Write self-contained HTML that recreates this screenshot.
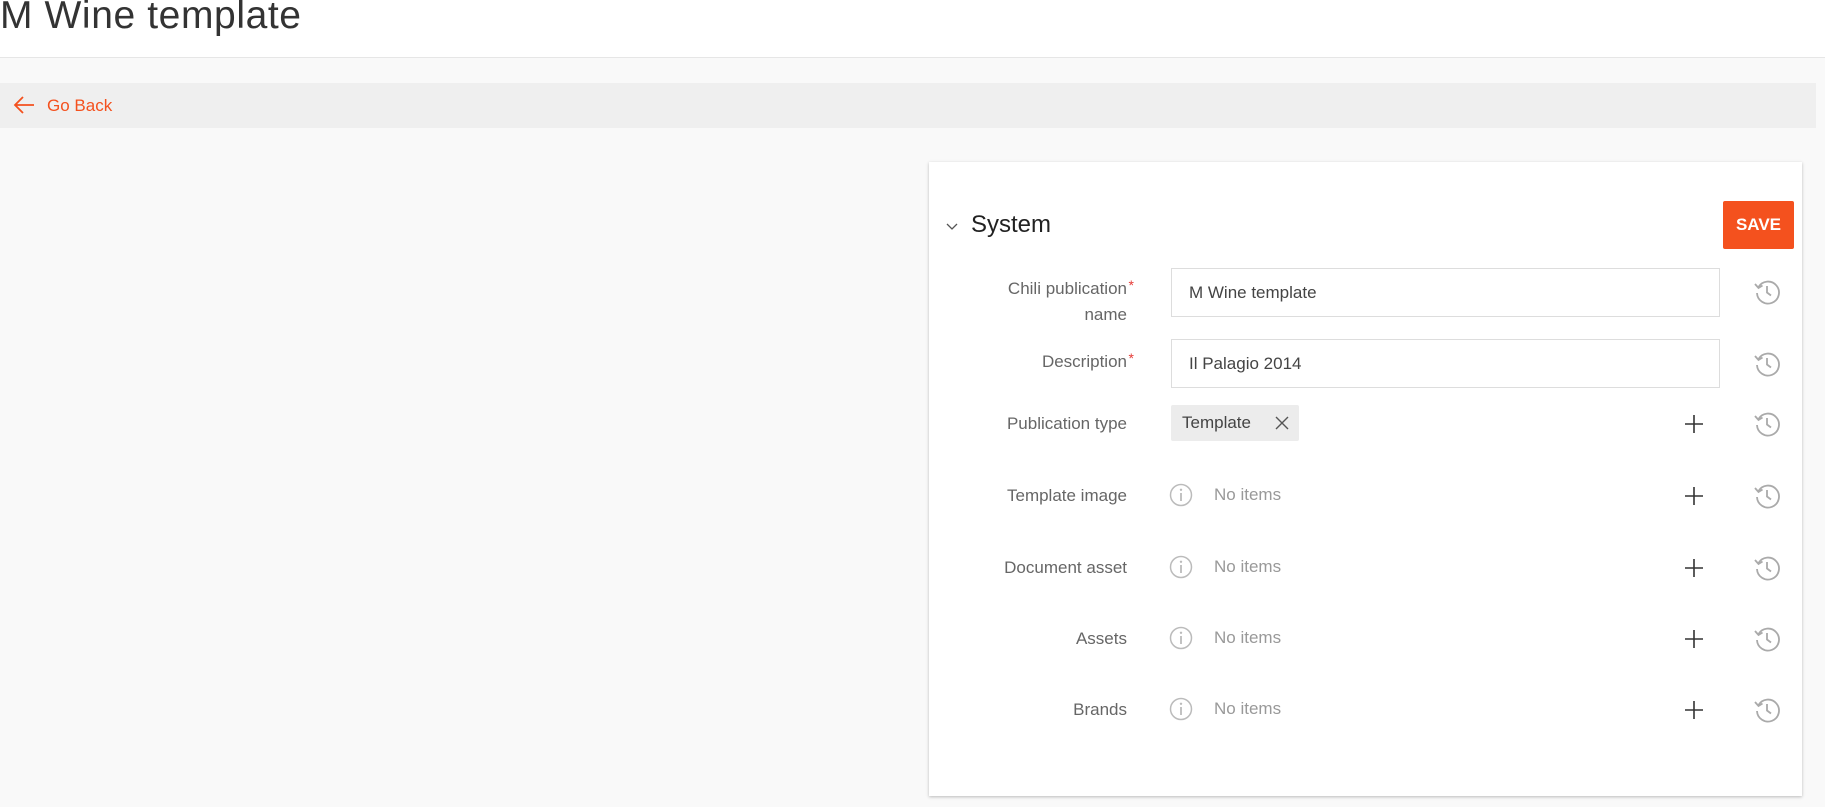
<!DOCTYPE html>
<html><head><meta charset="utf-8"><style>
*{box-sizing:border-box;margin:0;padding:0}
body{width:1825px;height:807px;background:#f9f9f9;font-family:"Liberation Sans",sans-serif;position:relative;overflow:hidden;color:#333}
.hdr{position:absolute;left:0;top:0;width:1825px;height:58px;background:#fff;border-bottom:1px solid #e6e6e6}
.hdr h1{position:absolute;left:0;top:-6px;font-weight:300;font-size:39px;color:#333;letter-spacing:0.6px}
.back{position:absolute;left:0;top:83px;width:1816px;height:45px;background:#efefef}
.back span{position:absolute;left:47px;top:13px;font-size:17px;color:#f4511e}
.card{position:absolute;left:929px;top:162px;width:873px;height:634px;background:#fff;box-shadow:0 1px 3px rgba(0,0,0,.25)}
.ab{position:absolute}
.lbl{position:absolute;right:675px;text-align:right;font-size:17px;color:#666;line-height:26px}
.lbl i{color:#e53935;font-style:normal;position:absolute;right:-7px;top:-4px;font-size:14px}
.inp{position:absolute;left:242px;width:549px;height:49px;border:1px solid #ddd;font-size:17px;color:#444;padding:14px 0 0 17px}
.ni{position:absolute;left:285px;font-size:17px;color:#999}
.plus{position:absolute;left:755px;width:20px;height:20px}
.hist{position:absolute;left:824px;width:28px;height:28px}
.info{position:absolute;left:240px;width:24px;height:24px}
</style></head><body>
<div class="hdr"><h1>M Wine template</h1></div>
<div class="back">
<svg class="ab" style="left:13px;top:12px" width="22" height="20" viewBox="0 0 22 20"><path d="M21 10H2M10 2L2 10l8 8" fill="none" stroke="#f4511e" stroke-width="1.8"/></svg>
<span>Go Back</span></div>
<div class="card">
<svg class="ab" style="left:16px;top:60px" width="14" height="10" viewBox="0 0 14 10"><path d="M2 2l5 5 5-5" fill="none" stroke="#555" stroke-width="1.3"/></svg>
<div class="ab" style="left:42px;top:49px;font-size:24px;color:#222">System</div>
<div class="ab" style="left:794px;top:39px;width:71px;height:48px;background:#f4511e;border-radius:2px;color:#fff;font-weight:bold;font-size:17px;text-align:center;line-height:48px">SAVE</div>

<div class="lbl" style="top:114px">Chili publication<i>*</i><br>name</div>
<div class="inp" style="top:106px">M Wine template</div>
<div class="lbl" style="top:187px">Description<i>*</i></div>
<div class="inp" style="top:177px">Il Palagio 2014</div>
<div class="lbl" style="top:249px">Publication type</div>
<div class="ab" style="left:242px;top:243px;width:128px;height:36px;background:#ececec;border-radius:2px;font-size:17px;color:#444;padding:8px 0 0 11px">Template
<svg class="ab" style="left:104px;top:11px" width="14" height="14" viewBox="0 0 14 14"><path d="M1 1l12 12M13 1L1 13" stroke="#555" stroke-width="1.4"/></svg></div>

<div class="lbl" style="top:321px">Template image</div>
<div class="lbl" style="top:393px">Document asset</div>
<div class="lbl" style="top:464px">Assets</div>
<div class="lbl" style="top:535px">Brands</div>

<div class="ni" style="top:323px">No items</div>
<div class="ni" style="top:395px">No items</div>
<div class="ni" style="top:466px">No items</div>
<div class="ni" style="top:537px">No items</div>

<svg width="0" height="0" style="position:absolute"><defs>
<symbol id="h" viewBox="0 0 28 28"><path d="M5.5 9A11 11 0 1 1 4 15" fill="none" stroke="#aaa" stroke-width="1.8"/><path d="M2 6l3.5 4 4-2.5" fill="none" stroke="#aaa" stroke-width="1.8"/><path d="M14 8v6.5l4 3" fill="none" stroke="#aaa" stroke-width="1.8"/></symbol>
<symbol id="p" viewBox="0 0 20 20"><path d="M10 1v18M1 10h18" stroke="#333" stroke-width="1.6"/></symbol>
<symbol id="i" viewBox="0 0 24 24"><circle cx="12" cy="12" r="10.5" fill="none" stroke="#bbb" stroke-width="1.5"/><path d="M12 10v8" stroke="#bbb" stroke-width="1.8"/><circle cx="12" cy="6.8" r="1.2" fill="#bbb"/></symbol>
</defs></svg>

<svg class="hist" style="top:116px"><use href="#h"/></svg>
<svg class="hist" style="top:188px"><use href="#h"/></svg>
<svg class="hist" style="top:248px"><use href="#h"/></svg>
<svg class="hist" style="top:320px"><use href="#h"/></svg>
<svg class="hist" style="top:392px"><use href="#h"/></svg>
<svg class="hist" style="top:463px"><use href="#h"/></svg>
<svg class="hist" style="top:534px"><use href="#h"/></svg>

<svg class="plus" style="top:252px"><use href="#p"/></svg>
<svg class="plus" style="top:324px"><use href="#p"/></svg>
<svg class="plus" style="top:396px"><use href="#p"/></svg>
<svg class="plus" style="top:467px"><use href="#p"/></svg>
<svg class="plus" style="top:538px"><use href="#p"/></svg>

<svg class="info" style="top:321px"><use href="#i"/></svg>
<svg class="info" style="top:393px"><use href="#i"/></svg>
<svg class="info" style="top:464px"><use href="#i"/></svg>
<svg class="info" style="top:535px"><use href="#i"/></svg>
</div>
</body></html>
